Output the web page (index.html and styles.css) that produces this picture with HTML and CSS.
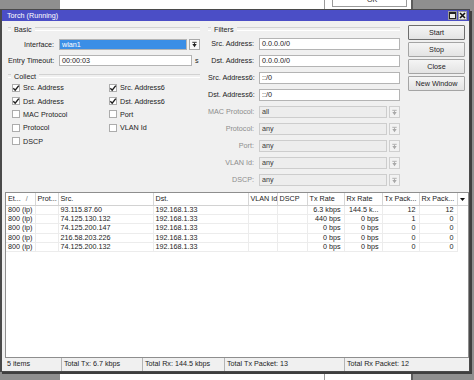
FILE: index.html
```html
<!DOCTYPE html>
<html lang="en">
<head>
    <meta charset="UTF-8">
    <meta name="viewport" content="width=device-width, initial-scale=1.0">
    <title>Torch (Running)</title>
    <link rel="stylesheet" href="styles.css">
</head>
<body>
    <svg class="defs" width="0" height="0">
        <symbol id="dd-icon" viewBox="0 0 8 8">
            <path d="M1.5 1.5h5" stroke="currentColor" stroke-width="1" fill="none"/>
            <path d="M4 2v2" stroke="currentColor" stroke-width="1" fill="none"/>
            <path d="M1.5 3.5h5L4 7z" fill="currentColor"/>
        </symbol>
        <symbol id="tick" viewBox="0 0 8 8">
            <path d="M1.3 4.2l1.9 2 3.6-4.6" stroke="#1e1e1e" stroke-width="1.4" fill="none"/>
        </symbol>
    </svg>

    <div class="desktop">
        <!-- window behind the torch window -->
        <div class="back-window">
            <div class="back-main"></div>
            <div class="back-side"><span class="back-button">OK</span></div>
        </div>

        <div class="window">
            <div class="titlebar">
                <span class="title">Torch (Running)</span>
                <span class="title-buttons">
                    <span class="title-btn">
                        <svg width="7" height="7" viewBox="0 0 7 7"><rect x="0.5" y="0.5" width="6" height="6" fill="none" stroke="#222"/><path d="M0.5 1.5h6" stroke="#222"/></svg>
                    </span>
                    <span class="title-btn">
                        <svg width="7" height="7" viewBox="0 0 7 7"><path d="M1 1l5 5M6 1l-5 5" stroke="#111" stroke-width="1.6"/></svg>
                    </span>
                </span>
            </div>

            <div class="window-body">
                <div class="form">
                    <div class="column">
                        <div class="group-head"><span>Basic</span></div>
                        <div class="field-row first">
                            <label>Interface:</label>
                            <div class="field selected">wlan1</div>
                            <span class="dd"><svg><use href="#dd-icon"/></svg></span>
                        </div>
                        <div class="field-row">
                            <label>Entry Timeout:</label>
                            <div class="field">00:00:03</div>
                            <span class="unit">s</span>
                        </div>
                        <div class="group-head spaced"><span>Collect</span></div>
                        <div class="checks">
                            <div class="check"><span class="box"><svg><use href="#tick"/></svg></span>Src. Address</div>
                            <div class="check"><span class="box"><svg><use href="#tick"/></svg></span>Src. Address6</div>
                            <div class="check"><span class="box"><svg><use href="#tick"/></svg></span>Dst. Address</div>
                            <div class="check"><span class="box"><svg><use href="#tick"/></svg></span>Dst. Address6</div>
                            <div class="check"><span class="box"></span>MAC Protocol</div>
                            <div class="check"><span class="box"></span>Port</div>
                            <div class="check"><span class="box"></span>Protocol</div>
                            <div class="check"><span class="box"></span>VLAN Id</div>
                            <div class="check"><span class="box"></span>DSCP</div>
                        </div>
                    </div>

                    <div class="column">
                        <div class="group-head"><span>Filters</span></div>
                        <div class="filter-rows">
                            <div class="field-row">
                                <label>Src. Address:</label>
                                <div class="field">0.0.0.0/0</div>
                            </div>
                            <div class="field-row">
                                <label>Dst. Address:</label>
                                <div class="field">0.0.0.0/0</div>
                            </div>
                            <div class="field-row">
                                <label>Src. Address6:</label>
                                <div class="field">::/0</div>
                            </div>
                            <div class="field-row">
                                <label>Dst. Address6:</label>
                                <div class="field">::/0</div>
                            </div>
                            <div class="field-row disabled">
                                <label>MAC Protocol:</label>
                                <div class="field">all</div>
                                <span class="dd"><svg><use href="#dd-icon"/></svg></span>
                            </div>
                            <div class="field-row disabled">
                                <label>Protocol:</label>
                                <div class="field">any</div>
                                <span class="dd"><svg><use href="#dd-icon"/></svg></span>
                            </div>
                            <div class="field-row disabled">
                                <label>Port:</label>
                                <div class="field">any</div>
                                <span class="dd"><svg><use href="#dd-icon"/></svg></span>
                            </div>
                            <div class="field-row disabled">
                                <label>VLAN Id:</label>
                                <div class="field">any</div>
                                <span class="dd"><svg><use href="#dd-icon"/></svg></span>
                            </div>
                            <div class="field-row disabled">
                                <label>DSCP:</label>
                                <div class="field">any</div>
                                <span class="dd"><svg><use href="#dd-icon"/></svg></span>
                            </div>
                        </div>
                    </div>

                    <div class="buttons">
                        <button class="button default">Start</button>
                        <button class="button">Stop</button>
                        <button class="button">Close</button>
                        <button class="button">New Window</button>
                    </div>
                </div>

                <div class="table-wrap">
                    <table class="list">
                        <colgroup>
                            <col style="width: 29px">
                            <col style="width: 23px">
                            <col style="width: 95px">
                            <col style="width: 95px">
                            <col style="width: 29px">
                            <col style="width: 30px">
                            <col style="width: 37px">
                            <col style="width: 38px">
                            <col style="width: 37px">
                            <col style="width: 38px">
                            <col>
                        </colgroup>
                        <thead>
                            <tr>
                                <th>Et...<span class="sort">/</span></th>
                                <th>Prot...</th>
                                <th>Src.</th>
                                <th>Dst.</th>
                                <th>VLAN Id</th>
                                <th>DSCP</th>
                                <th>Tx Rate</th>
                                <th>Rx Rate</th>
                                <th>Tx Pack...</th>
                                <th>Rx Pack...</th>
                                <th class="menu"><svg width="5" height="3" viewBox="0 0 5 3"><path d="M0 0h5L2.5 3z" fill="#111"/></svg></th>
                            </tr>
                        </thead>
                        <tbody>
                            <tr>
                                <td>800 (ip)</td><td></td><td>93.115.87.60</td><td>192.168.1.33</td><td></td><td></td>
                                <td class="num">6.3 kbps</td><td class="num">144.5 k...</td><td class="num">12</td><td class="num">12</td><td></td>
                            </tr>
                            <tr>
                                <td>800 (ip)</td><td></td><td>74.125.130.132</td><td>192.168.1.33</td><td></td><td></td>
                                <td class="num">440 bps</td><td class="num">0 bps</td><td class="num">1</td><td class="num">0</td><td></td>
                            </tr>
                            <tr>
                                <td>800 (ip)</td><td></td><td>74.125.200.147</td><td>192.168.1.33</td><td></td><td></td>
                                <td class="num">0 bps</td><td class="num">0 bps</td><td class="num">0</td><td class="num">0</td><td></td>
                            </tr>
                            <tr>
                                <td>800 (ip)</td><td></td><td>216.58.203.226</td><td>192.168.1.33</td><td></td><td></td>
                                <td class="num">0 bps</td><td class="num">0 bps</td><td class="num">0</td><td class="num">0</td><td></td>
                            </tr>
                            <tr>
                                <td>800 (ip)</td><td></td><td>74.125.200.132</td><td>192.168.1.33</td><td></td><td></td>
                                <td class="num">0 bps</td><td class="num">0 bps</td><td class="num">0</td><td class="num">0</td><td></td>
                            </tr>
                        </tbody>
                    </table>
                </div>

                <div class="status">
                    <span class="status-cell items">5 items</span>
                    <span class="status-cell tx">Total Tx: 6.7 kbps</span>
                    <span class="status-cell rx">Total Rx: 144.5 kbps</span>
                    <span class="status-cell txp">Total Tx Packet: 13</span>
                    <span class="status-cell rxp">Total Rx Packet: 12</span>
                </div>
            </div>
        </div>
    </div>
</body>
</html>
```

FILE: styles.css
```css
:root {
    --desktop-color: #8f8f8f;
    --window-color: #f0f0f0;
    --title-color: #4b4ec6;
    --text-color: #1c1c1c;
    --muted-color: #8d8d8d;
    --field-border: #b4b4b4;
    --grid-line: #ececec;
}

* {
    box-sizing: border-box;
    margin: 0;
    padding: 0;
}

body {
    background-color: var(--desktop-color);
    color: var(--text-color);
    font-family: 'Liberation Sans', Arial, sans-serif;
    font-size: 7.2px;
    overflow: hidden;
}

.defs {
    position: absolute;
}

.desktop {
    position: relative;
    width: 474px;
    height: 380px;
    overflow: hidden;
}

/* background window */
.back-window {
    position: absolute;
    left: 60px;
    top: -30px;
    width: 353px;
    height: 440px;
    display: flex;
    background-color: #fff;
    border-right: 2px solid #5c5c5c;
}

.back-main {
    width: 265px;
    border-right: 1px solid #9a9a9a;
}

.back-side {
    flex: 1;
    padding: 22px 4px 0 7px;
}

.back-button {
    display: block;
    height: 15px;
    line-height: 13px;
    border: 1px solid #9a9a9a;
    padding-left: 34px;
}

/* torch window */
.window {
    position: absolute;
    left: 0;
    top: 9px;
    width: 470px;
    height: 363px;
    display: flex;
    flex-direction: column;
    background-color: var(--window-color);
    border: 1px solid #4a4a4a;
    border-left-width: 2px;
    box-shadow: 2px 2px 0 #3f3f3f;
}

.titlebar {
    height: 11px;
    display: flex;
    align-items: center;
    background-color: var(--title-color);
    color: #fff;
    padding: 0 2px 0 5px;
}

.title-buttons {
    margin-left: auto;
    display: flex;
    gap: 1px;
}

.title-btn {
    width: 9px;
    height: 9px;
    display: flex;
    align-items: center;
    justify-content: center;
    background-color: #ececec;
    border: 1px solid #9c9c9c;
}

.window-body {
    flex: 1;
    display: flex;
    flex-direction: column;
    padding-left: 3px;
    min-height: 0;
}

.form {
    display: flex;
    gap: 8px;
    padding: 3px 0 6px 3px;
}

.column {
    width: 192px;
}

.group-head {
    height: 10px;
    display: flex;
    align-items: center;
}

.group-head::before,
.group-head::after {
    content: "";
    height: 2px;
    border-top: 1px solid #d2d2d2;
    border-bottom: 1px solid #fff;
}

.group-head::before {
    width: 3px;
}

.group-head::after {
    flex: 1;
}

.group-head span {
    padding: 0 3px;
}

.group-head.spaced {
    margin-top: 5px;
}

.field-row {
    height: 12px;
    display: flex;
    align-items: stretch;
    margin-top: 5px;
}

.field-row.first {
    height: 11px;
}

.column > .field-row {
    height: 11px;
}

.field-row label {
    width: 51px;
    padding-right: 5px;
    text-align: right;
    white-space: nowrap;
    line-height: 11px;
}

.field {
    flex: 1;
    background-color: #fff;
    border: 1px solid var(--field-border);
    padding-left: 2px;
    line-height: 9px;
    white-space: nowrap;
    overflow: hidden;
}

.field.selected {
    background-color: #3b8ee6;
    color: #fff;
}

.dd {
    width: 11px;
    margin-left: 2px;
    display: flex;
    align-items: center;
    justify-content: center;
    background-color: #f7f7f7;
    border: 1px solid #a9a9a9;
    color: #1e1e1e;
}

.dd svg {
    width: 7px;
    height: 7px;
}

.unit {
    width: 8px;
    padding-left: 3px;
    line-height: 11px;
}

.filter-rows {
    padding-top: 0;
}

.filter-rows .field-row:first-child {
    margin-top: 4px;
}

.field-row.disabled label {
    color: var(--muted-color);
}

.field-row.disabled .field {
    background-color: #ededed;
    border-color: #cdcdcd;
    color: #3a3a3a;
}

.field-row.disabled .dd {
    background-color: #f2f2f2;
    border-color: #cfcfcf;
    color: #a8a8a8;
}

.checks {
    display: grid;
    grid-template-columns: 97px 1fr;
    grid-auto-rows: 13.4px;
    padding-left: 4px;
}

.check {
    display: flex;
    align-items: center;
    gap: 3px;
    white-space: nowrap;
}

.box {
    width: 8px;
    height: 8px;
    background-color: #fff;
    border: 1px solid #acacac;
    display: flex;
}

.box svg {
    width: 8px;
    height: 8px;
    margin: -1px;
}

.buttons {
    width: 57px;
    display: flex;
    flex-direction: column;
    gap: 2px;
    padding-top: 1px;
}

.button {
    height: 15px;
    font: inherit;
    color: var(--text-color);
    background: linear-gradient(#f5f5f5, #e3e3e3);
    border: 1px solid #a4a4a4;
    border-radius: 1px;
}

.button.default {
    border-color: #6d6d6d;
}

.table-wrap {
    flex: 1;
    background-color: #fff;
    border: 1px solid #8e8e8e;
    overflow: hidden;
}

.list {
    width: 100%;
    table-layout: fixed;
    border-collapse: collapse;
}

.list th {
    height: 12px;
    font-weight: normal;
    text-align: left;
    padding: 0 2px;
    white-space: nowrap;
    overflow: hidden;
    border-right: 1px solid #d6d6d6;
    border-bottom: 1px solid #d2d2d2;
}

.list th.menu {
    border-right: none;
    text-align: center;
    padding: 0;
}

.sort {
    margin-left: 5px;
    color: #777;
}

.list td {
    height: 9.4px;
    line-height: 8px;
    padding: 0 2px;
    white-space: nowrap;
    overflow: hidden;
    border-right: 1px solid var(--grid-line);
    border-bottom: 1px solid var(--grid-line);
}

.list td:last-child {
    border-right: none;
    border-bottom: none;
}

.list td.num {
    text-align: right;
    padding-right: 3px;
}

.status {
    height: 13px;
    display: flex;
}

.status-cell {
    line-height: 12px;
    padding-left: 2px;
    border-right: 1px solid #b4b4b4;
    white-space: nowrap;
}

.status-cell.items { width: 57px; }
.status-cell.tx { width: 81px; }
.status-cell.rx { width: 82px; }
.status-cell.txp { width: 120px; }

.status-cell.rxp {
    flex: 1;
    border-right: none;
}
```
